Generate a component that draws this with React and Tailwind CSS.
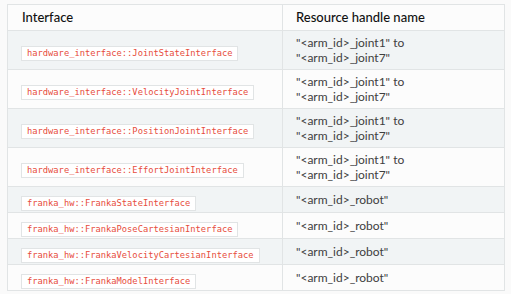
const rows = [
  ['hardware_interface::JointStateInterface', ['"<arm_id>_joint1" to', '"<arm_id>_joint7"']],
  ['hardware_interface::VelocityJointInterface', ['"<arm_id>_joint1" to', '"<arm_id>_joint7"']],
  ['hardware_interface::PositionJointInterface', ['"<arm_id>_joint1" to', '"<arm_id>_joint7"']],
  ['hardware_interface::EffortJointInterface', ['"<arm_id>_joint1" to', '"<arm_id>_joint7"']],
  ['franka_hw::FrankaStateInterface', ['"<arm_id>_robot"']],
  ['franka_hw::FrankaPoseCartesianInterface', ['"<arm_id>_robot"']],
  ['franka_hw::FrankaVelocityCartesianInterface', ['"<arm_id>_robot"']],
  ['franka_hw::FrankaModelInterface', ['"<arm_id>_robot"']],
]

export default function App() {
  return (
    <div className="min-h-screen w-[511px] bg-[#fafafa] pl-[7px] pt-[4px] font-['Lato','Noto_Sans',sans-serif]">
      <table className="w-[498px] border-collapse border border-[#e1e4e5] bg-[#fcfcfc]">
        <thead>
          <tr className="h-[26px]">
            <th className="w-[275px] border border-[#e1e4e5] pl-[14px] text-left text-[13px] font-medium text-[#111]">
              Interface
            </th>
            <th className="border border-[#e1e4e5] pl-[13px] text-left text-[13px] font-medium text-[#111]">
              Resource handle name
            </th>
          </tr>
        </thead>
        <tbody>
          {rows.map(([iface, names], i) => (
            <tr
              key={iface}
              className={`${names.length > 1 ? 'h-[39px]' : 'h-[26px]'} ${i % 2 === 0 ? 'bg-[#f1f4f5]' : 'bg-[#fcfcfc]'}`}
            >
              <td className="border border-[#e1e4e5] pl-[13px] align-middle">
                <code className="inline-block border border-[#e1e4e5] bg-white px-[5px] py-[1px] font-['DejaVu_Sans_Mono',monospace] text-[8.75px] leading-[11px] text-[#e74c3c]">
                  {iface}
                </code>
              </td>
              <td className="border border-[#e1e4e5] pl-[13px] text-[12px] leading-[15px] text-[#404040]">
                {names.map((n) => (
                  <div key={n}>{n}</div>
                ))}
              </td>
            </tr>
          ))}
        </tbody>
      </table>
    </div>
  )
}
